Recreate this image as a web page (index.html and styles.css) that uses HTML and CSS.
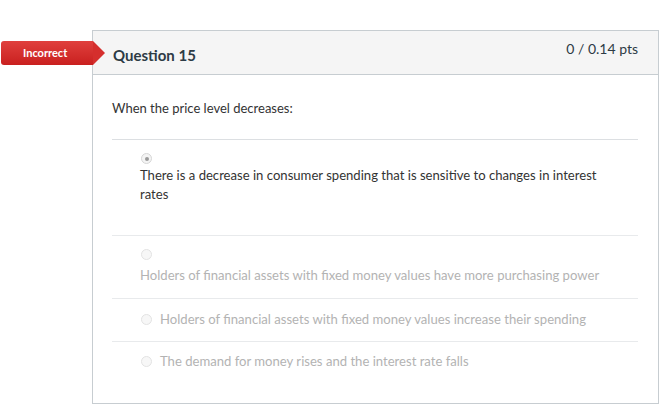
FILE: index.html
```html
<!DOCTYPE html>
<html>
<head>
<meta charset="utf-8">
<link rel="stylesheet" href="styles.css">
</head>
<body>
<div class="page">
  <div class="card">
    <div class="banner">Incorrect</div>
    <div class="header">
      <h2 class="title">Question 15</h2>
      <div class="pts">0 / 0.14 pts</div>
    </div>
    <div class="body">
      <p class="prompt">When the price level decreases:</p>
      <div class="answers">
        <div class="answer stacked selected first">
          <span class="radio"></span>
          <div class="text">There is a decrease in consumer spending that is sensitive to changes in interest rates</div>
        </div>
        <div class="answer stacked faded second">
          <span class="radio"></span>
          <div class="text">Holders of financial assets with fixed money values have more purchasing power</div>
        </div>
        <div class="answer inline faded">
          <span class="radio"></span>
          <div class="text">Holders of financial assets with fixed money values increase their spending</div>
        </div>
        <div class="answer inline faded last">
          <span class="radio"></span>
          <div class="text">The demand for money rises and the interest rate falls</div>
        </div>
      </div>
    </div>
  </div>
</div>
</body>
</html>
```

FILE: styles.css
```css
* { box-sizing: border-box; }
html, body { margin: 0; padding: 0; background: #fff; }
body { font-family: Lato, "Open Sans", "Liberation Sans", sans-serif; color: #2d3b45; }

.page {
  padding: 30px 11px 0 92px;
  width: 670px;
}

.card {
  position: relative;
  border: 1px solid #c7cdd1;
  height: 374px;
}

.banner {
  position: absolute;
  left: -92px;
  top: 10px;
  width: 92px;
  height: 24px;
  background: linear-gradient(#e0403d, #c9201f);
  color: #fff;
  font-size: 11px;
  font-weight: 700;
  line-height: 24px;
  padding-left: 22px;
  border-radius: 3px 0 0 3px;
}
.banner::after {
  content: "";
  position: absolute;
  right: -12px;
  top: 0;
  width: 0;
  height: 0;
  border-top: 12px solid transparent;
  border-bottom: 12px solid transparent;
  border-left: 12px solid #d52f2d;
}

.header {
  display: flex;
  justify-content: space-between;
  align-items: flex-start;
  background: #f5f5f5;
  border-bottom: 1px solid #c7cdd1;
  height: 44px;
  padding: 0 20px 0 20px;
}
.title {
  margin: 0;
  font-size: 15px;
  font-weight: 700;
  line-height: 20px;
  padding-top: 14px;
  color: #2d3b45;
}
.pts {
  font-size: 14px;
  line-height: 18px;
  padding-top: 9px;
  color: #2d3b45;
}

.body {
  padding: 24px 20px 0 19px;
}
.prompt {
  margin: 0;
  font-size: 13px;
  line-height: 18px;
  color: #333;
  padding-bottom: 22px;
  border-bottom: 1px solid #dcdfe2;
}

.answer {
  border-bottom: 1px solid #e8eaec;
  padding-left: 28px;
  font-size: 13.1px;
  line-height: 19px;
}
.answer .text { max-width: 470px; }
.answer.last { border-bottom: none; }
.answer.stacked { padding-top: 13px; }
.answer.first { padding-bottom: 31px; }
.answer.first .radio { margin-bottom: 2px; }
.answer.second { padding-bottom: 13px; }
.answer.second .radio { margin-bottom: 6px; }
.answer.inline { display: flex; align-items: center; padding-top: 11px; padding-bottom: 12px; }
.answer.inline.last { padding-top: 10px; }
.answer.inline .radio { margin: 0 8px 0 1px; }

.radio {
  display: block;
  flex: none;
  width: 11px;
  height: 11px;
  border-radius: 50%;
  border: 1px solid #d6d6d6;
  background: #f4f4f4;
  margin: 0 0 4px 1px;
  position: relative;
}
.selected .radio::after {
  content: "";
  position: absolute;
  left: 2.5px;
  top: 2.5px;
  width: 4px;
  height: 4px;
  border-radius: 50%;
  background: #9a9a9a;
}
.selected .text { color: #333; }
.faded .text { color: #b3b3b3; }
.faded .radio { border-color: #e3e3e3; background: #f7f7f7; }
```
